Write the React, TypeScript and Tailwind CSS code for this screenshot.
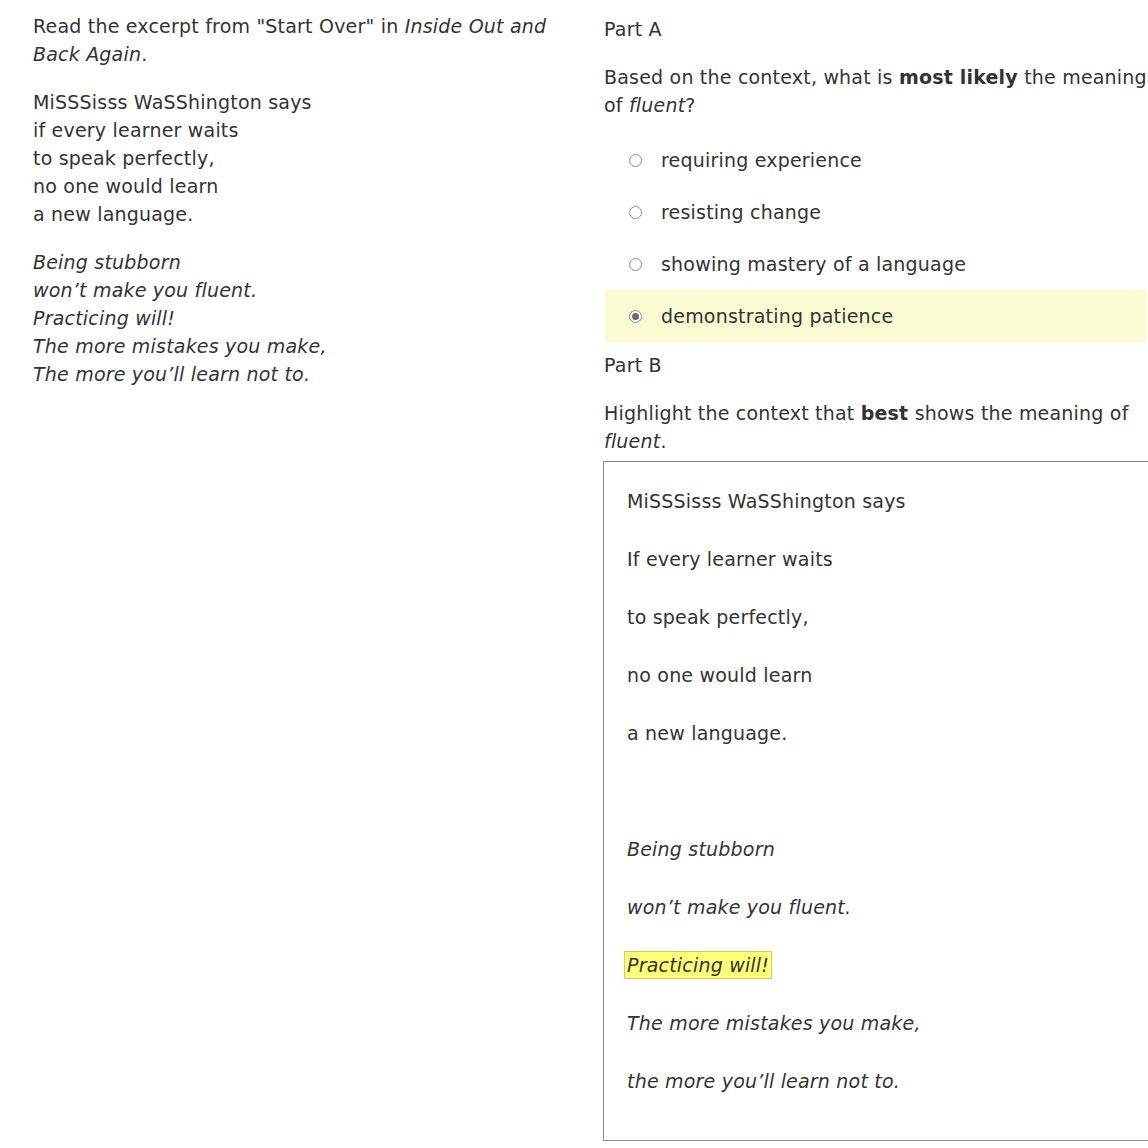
import React from "react"

const options = [
  "requiring experience",
  "resisting change",
  "showing mastery of a language",
  "demonstrating patience",
]

const selected = 3

function Radio({ checked }: { checked: boolean }) {
  return (
    <span className="flex h-[13px] w-[13px] shrink-0 items-center justify-center rounded-full border border-[#8f8f8f] bg-white">
      {checked && <span className="h-[7px] w-[7px] rounded-full bg-[#6b6b6b]"></span>}
    </span>
  )
}

export default function App() {
  return (
    <div
      className="flex w-full min-h-[1148px] overflow-hidden bg-white text-[19px] leading-[28px] tracking-[0.2px] text-[#333333]"
      style={{ fontFamily: '"DejaVu Sans", "Liberation Sans", sans-serif' }}
    >
      {/* Passage */}
      <div className="w-[604px] shrink-0 pl-[33px] pr-[36px] pt-[12px]">
        <p className="mb-[20px]">
          Read the excerpt from "Start Over" in <i>Inside Out and</i>
          <br />
          <i>Back Again</i>.
        </p>
        <p className="mb-[20px]">
          MiSSSisss WaSShington says
          <br />
          if every learner waits
          <br />
          to speak perfectly,
          <br />
          no one would learn
          <br />a new language.
        </p>
        <p className="italic">
          Being stubborn
          <br />
          won’t make you fluent.
          <br />
          Practicing will!
          <br />
          The more mistakes you make,
          <br />
          The more you’ll learn not to.
        </p>
      </div>

      {/* Questions */}
      <div className="w-[560px] shrink-0 pt-[15px]">
        <p className="mb-[20px]">Part A</p>
        <p className="mb-[15px] w-[548px]">
          Based on the context, what is <b>most likely</b> the meaning
          <br />
          of <i>fluent</i>?
        </p>
        <div className="w-[541px] ml-[1px]">
          {options.map((opt, i) => (
            <div
              key={opt}
              className={
                "flex h-[52px] items-center gap-[19px] pl-[24px] " +
                (i === selected ? "bg-[#fafad2]" : "")
              }
            >
              <Radio checked={i === selected} />
              <span>{opt}</span>
            </div>
          ))}
        </div>

        <p className="mt-[9px] mb-[20px]">Part B</p>
        <p className="mb-[6px] w-[548px]">
          Highlight the context that <b>best</b> shows the meaning of
          <br />
          <i>fluent</i>.
        </p>

        <div className="-ml-[1px] w-[580px] border border-[#8c8c8c] pl-[23px] pt-[25px] pb-[15px]">
          <p className="mb-[30px]">MiSSSisss WaSShington says</p>
          <p className="mb-[30px]">If every learner waits</p>
          <p className="mb-[30px]">to speak perfectly,</p>
          <p className="mb-[30px]">no one would learn</p>
          <p className="mb-[30px]">a new language.</p>
          <p className="mb-[30px] h-[28px]"></p>
          <p className="mb-[30px] italic">Being stubborn</p>
          <p className="mb-[30px] italic">won’t make you fluent.</p>
          <p className="mb-[30px] italic">
            <span className="-ml-[3px] border border-[#cfcf6a] bg-[#ffff78] px-[2px] py-[2px]">
              Practicing will!
            </span>
          </p>
          <p className="mb-[30px] italic">The more mistakes you make,</p>
          <p className="mb-[30px] italic">the more you’ll learn not to.</p>
        </div>
      </div>
    </div>
  )
}
